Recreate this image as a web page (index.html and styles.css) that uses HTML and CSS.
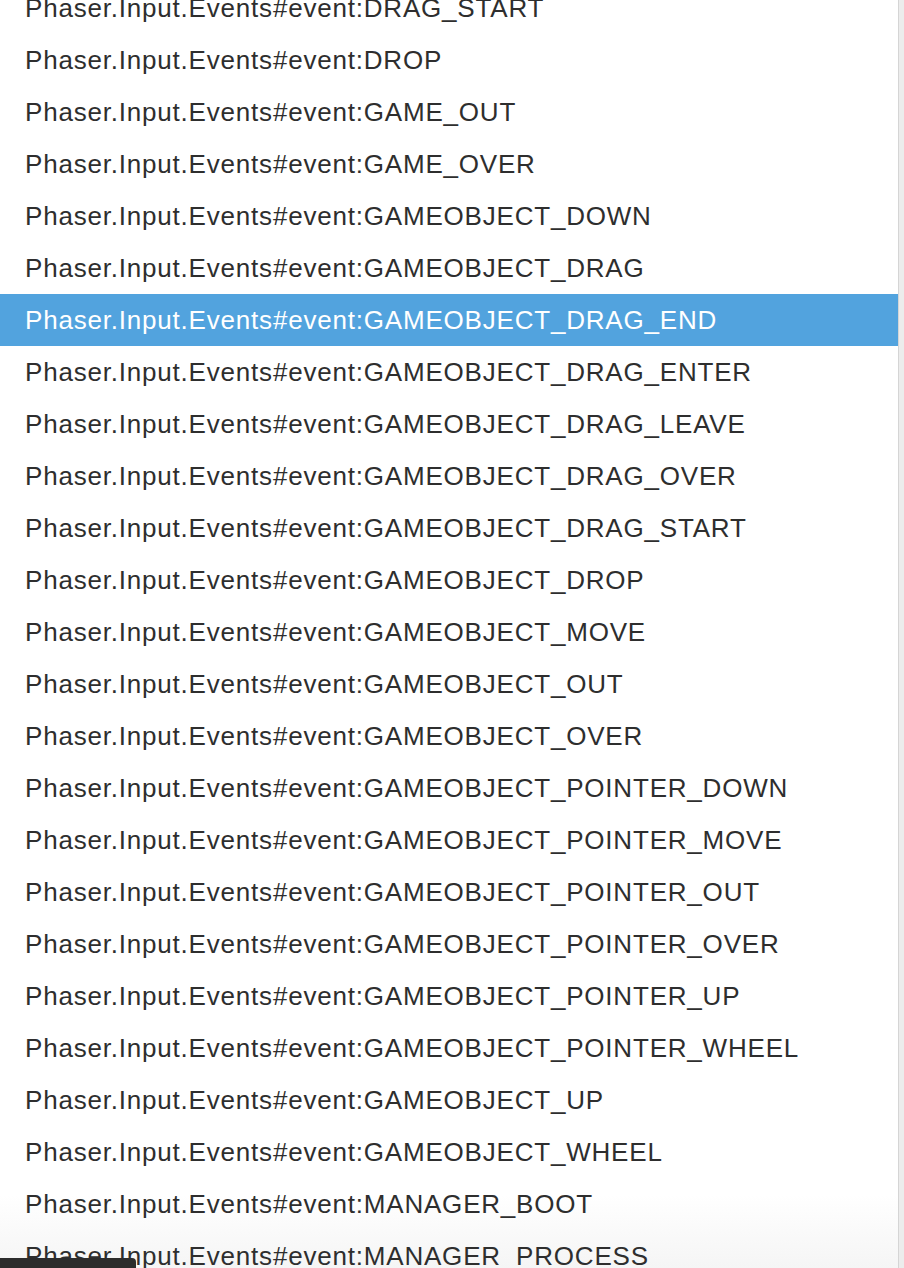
FILE: index.html
```html
<!DOCTYPE html>
<html>
    <head>
        <title>Events</title>
        <meta charset="UTF-8">
        <link rel="stylesheet" href="styles.css">
    </head>
    <body>
        <div class="panel">
            <ul class="event-list">
                <li>Phaser.Input.Events#event:DRAG_START</li>
                <li>Phaser.Input.Events#event:DROP</li>
                <li>Phaser.Input.Events#event:GAME_OUT</li>
                <li>Phaser.Input.Events#event:GAME_OVER</li>
                <li>Phaser.Input.Events#event:GAMEOBJECT_DOWN</li>
                <li>Phaser.Input.Events#event:GAMEOBJECT_DRAG</li>
                <li class="selected">Phaser.Input.Events#event:GAMEOBJECT_DRAG_END</li>
                <li>Phaser.Input.Events#event:GAMEOBJECT_DRAG_ENTER</li>
                <li>Phaser.Input.Events#event:GAMEOBJECT_DRAG_LEAVE</li>
                <li>Phaser.Input.Events#event:GAMEOBJECT_DRAG_OVER</li>
                <li>Phaser.Input.Events#event:GAMEOBJECT_DRAG_START</li>
                <li>Phaser.Input.Events#event:GAMEOBJECT_DROP</li>
                <li>Phaser.Input.Events#event:GAMEOBJECT_MOVE</li>
                <li>Phaser.Input.Events#event:GAMEOBJECT_OUT</li>
                <li>Phaser.Input.Events#event:GAMEOBJECT_OVER</li>
                <li>Phaser.Input.Events#event:GAMEOBJECT_POINTER_DOWN</li>
                <li>Phaser.Input.Events#event:GAMEOBJECT_POINTER_MOVE</li>
                <li>Phaser.Input.Events#event:GAMEOBJECT_POINTER_OUT</li>
                <li>Phaser.Input.Events#event:GAMEOBJECT_POINTER_OVER</li>
                <li>Phaser.Input.Events#event:GAMEOBJECT_POINTER_UP</li>
                <li>Phaser.Input.Events#event:GAMEOBJECT_POINTER_WHEEL</li>
                <li>Phaser.Input.Events#event:GAMEOBJECT_UP</li>
                <li>Phaser.Input.Events#event:GAMEOBJECT_WHEEL</li>
                <li>Phaser.Input.Events#event:MANAGER_BOOT</li>
                <li>Phaser.Input.Events#event:MANAGER_PROCESS</li>
            </ul>
        </div>
        <div class="status-bar"></div>
    </body>
</html>
```

FILE: styles.css
```css
html, body {
    margin: 0;
    height: 100%;
    overflow: hidden;
}
body {
    background-color: #ececec;
    font-family: "Liberation Sans", Arial, sans-serif;
}
.panel {
    width: 898px;
    height: 1268px;
    /*slight shading toward the bottom edge*/
    background: linear-gradient(#fff 1195px, #f5f5f5 1268px);
    border-right: 1px solid #d5d5d5;
    overflow: hidden;
}
.event-list {
    list-style: none;
    margin: -18px 0 0 0; /*list is scrolled a bit*/
    padding: 0;
}
.event-list li {
    height: 52px;
    line-height: 52px;
    padding-left: 25px;
    font-size: 26px;
    letter-spacing: 0.8px;
    color: #2e2e2e;
    white-space: nowrap;
}
.event-list li.selected {
    background-color: #52a3de;
    color: #fff;
}
.status-bar {
    position: absolute;
    left: 0;
    bottom: 0;
    width: 136px;
    height: 10px;
    background-color: #2c2c2c;
    border-top-right-radius: 4px;
}
```
